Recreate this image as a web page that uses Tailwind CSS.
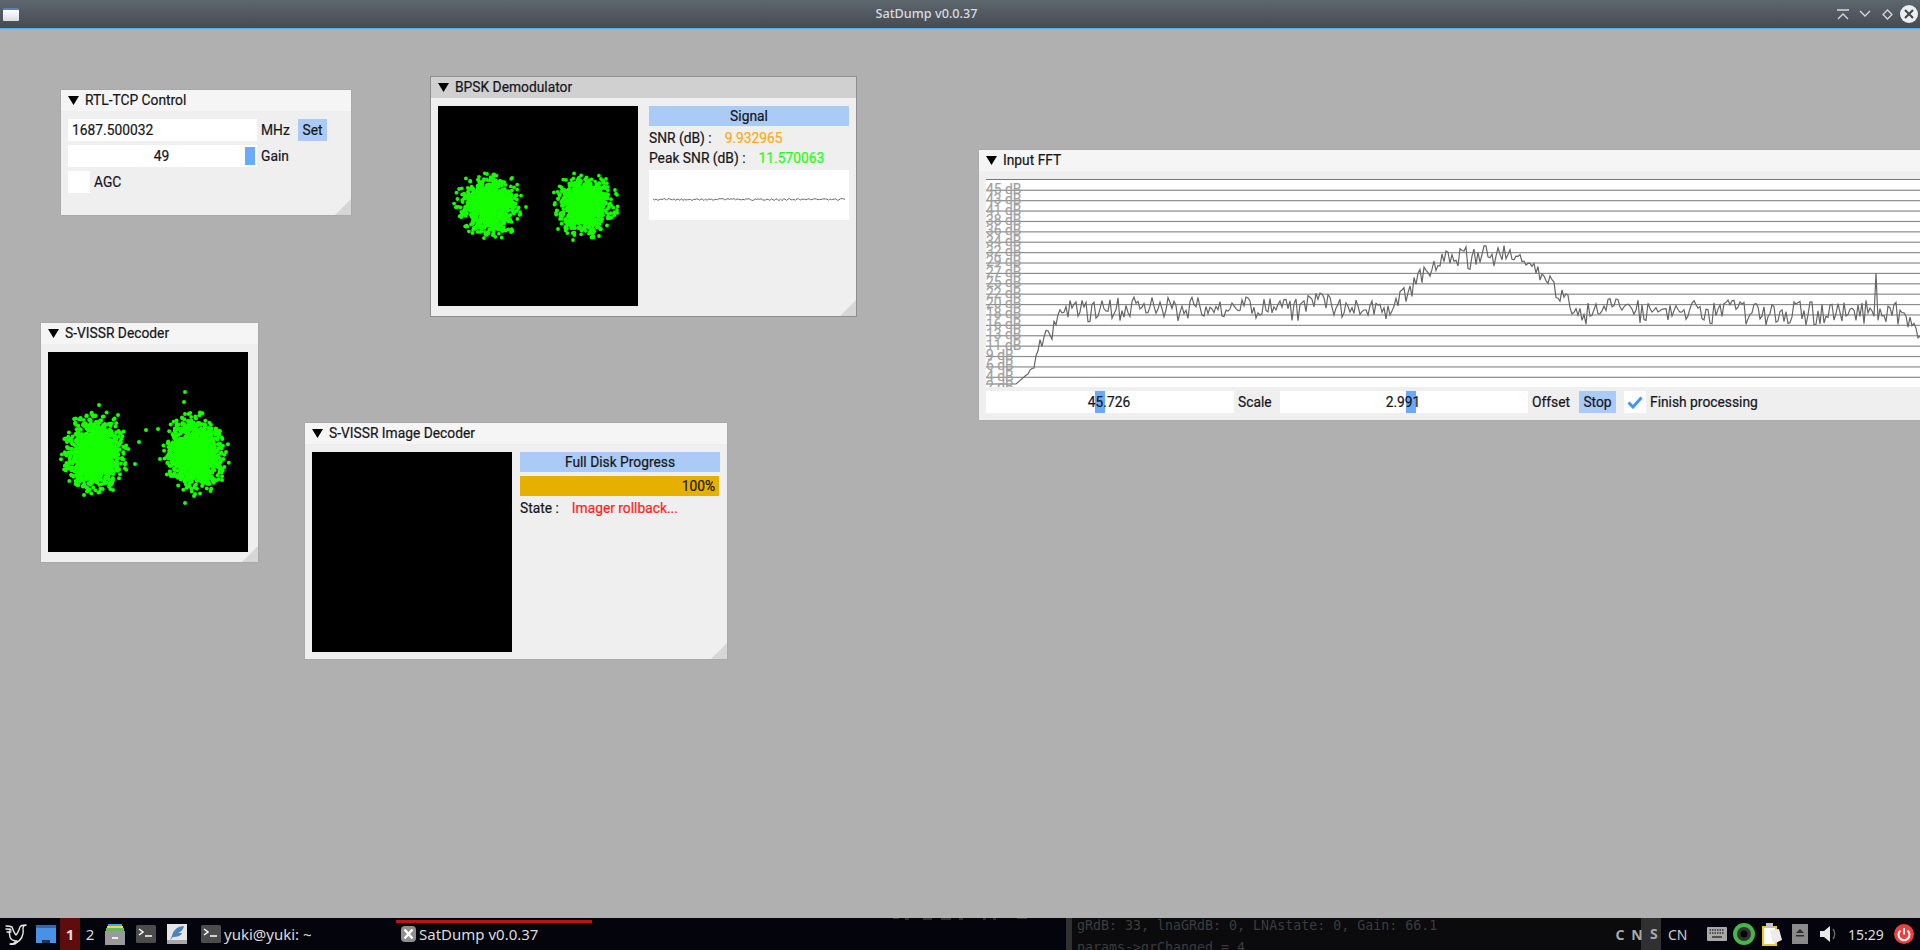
<!DOCTYPE html>
<html>
<head>
<meta charset="utf-8">
<script src="https://cdn.jsdelivr.net/npm/@tailwindcss/browser@4"></script>
<title>SatDump</title>
</head>
<body class="m-0 overflow-hidden">
<div class="relative w-[1920px] h-[950px] bg-[#b0b0b0] overflow-hidden font-['Roboto',sans-serif] font-normal [-webkit-text-stroke:0.2px_currentColor] text-[13.800px] text-[#16161a] flex flex-col">

  <!-- title bar -->
  <header class="h-[29px] shrink-0 flex items-center relative bg-gradient-to-b from-[#5e666e] to-[#444b53] border-b border-[#4ab0e8] [-webkit-text-stroke:0]">
    <div class="ml-[3px] w-4 h-[13px] bg-gradient-to-b from-[#ffffff] to-[#dcdcdc] border-t-2 border-[#5b7fb5] rounded-[1px]"></div>
    <div class="absolute left-0 top-0 w-[1853px] h-[28px] flex items-center justify-center text-[12.700px] text-[#d8dcdf] font-['Noto_Sans',sans-serif] font-medium">SatDump v0.0.37</div>
    <div class="ml-auto flex items-center">
      <svg width="12" height="11" viewBox="0 0 12 11" class="mr-[10px]" fill="none" stroke="#d5dadd" stroke-width="1.300"><path d="M0 1h12M1 10l5-5 5 5"/></svg>
      <svg width="12" height="8" viewBox="0 0 12 8" class="mr-[11px]" fill="none" stroke="#d5dadd" stroke-width="1.300"><path d="M1 1l5 5 5-5"/></svg>
      <svg width="11" height="11" viewBox="0 0 11 11" class="mr-[7px]" fill="none" stroke="#d5dadd" stroke-width="1.300"><path d="M5.500 1l4.500 4.500-4.500 4.500-4.500-4.500z"/></svg>
      <svg width="18" height="18" viewBox="0 0 18 18" class="mr-[2px]"><circle cx="9" cy="9" r="9" fill="#eceeef"/><path d="M5 5l8 8M13 5l-8 8" stroke="#3e454c" stroke-width="2"/></svg>
    </div>
  </header>

  <!-- desktop -->
  <main class="relative flex-1">

    <!-- RTL-TCP Control -->
    <section class="absolute left-[61px] top-[61px] w-[290px] h-[125px] bg-[#efefef] shadow-[0_0_1px_#8a8a8a]">
      <div class="h-[21px] bg-[#f5f5f5] flex items-center pl-[7px] gap-[6px]">
        <svg width="11" height="9" viewBox="0 0 11 9"><path d="M0 0h11L5.500 9z" fill="#000"/></svg><span>RTL-TCP Control</span>
      </div>
      <div class="pl-[7px] pt-2 flex flex-col gap-1">
        <div class="flex items-center h-[22px] pt-0">
          <div class="w-[189px] h-full bg-white flex items-center pl-1 pt-[1px]">1687.500032</div>
          <span class="ml-[4px] w-[37px] pt-[1px]">MHz</span>
          <div class="w-[29px] h-full bg-[#a9cbf5] flex items-center justify-center pt-[1px]">Set</div>
        </div>
        <div class="flex items-center h-[22px]">
          <div class="w-[189px] h-full bg-white relative flex items-center justify-center pr-[2px] pt-[1px]">49
            <div class="absolute left-[177px] top-[2px] w-[10px] h-[18px] bg-[#69abfa]"></div>
          </div>
          <span class="ml-[4px] pt-[1px]">Gain</span>
        </div>
        <div class="flex items-center h-[22px]">
          <div class="w-[22px] h-full bg-white"></div>
          <span class="ml-1 pt-[1px]">AGC</span>
        </div>
      </div>
      <svg class="absolute right-0 bottom-0" width="16" height="16"><path d="M16 0v16H0z" fill="#d6d6d6"/></svg>
    </section>

    <!-- BPSK Demodulator -->
    <section class="absolute left-[430px] top-[47px] w-[427px] h-[241px] bg-[#efefef] border border-[#8f8f8f]">
      <div class="h-[21px] bg-[#d0d0d0] flex items-center pl-[7px] gap-[6px]">
        <svg width="11" height="9" viewBox="0 0 11 9"><path d="M0 0h11L5.500 9z" fill="#000"/></svg><span>BPSK Demodulator</span>
      </div>
      <div class="pl-[7px] pt-2 flex gap-[11px]">
        <svg id="c1" width="200" height="200" class="bg-black block shrink-0"></svg>
        <div class="w-[200px] flex flex-col">
          <div class="h-5 bg-[#a9cbf5] flex items-center justify-center pt-[1px]">Signal</div>
          <div class="flex h-5 mt-[2px] items-center"><span>SNR (dB) :</span><span class="ml-[13px] text-[#ffaa1e]">9.932965</span></div>
          <div class="flex h-5 items-center"><span>Peak SNR (dB) :</span><span class="ml-[13px] text-[#1dff0a]">11.570063</span></div>
          <svg id="snr" width="200" height="50" class="bg-white block mt-[2px]"></svg>
        </div>
      </div>
      <svg class="absolute right-0 bottom-0" width="16" height="16"><path d="M16 0v16H0z" fill="#d6d6d6"/></svg>
    </section>

    <!-- Input FFT -->
    <section class="absolute left-[979px] top-[121px] w-[960px] h-[270px] bg-[#efefef] shadow-[0_0_1px_#8a8a8a]">
      <div class="h-[21px] bg-[#f5f5f5] flex items-center pl-[7px] gap-[6px]">
        <svg width="11" height="9" viewBox="0 0 11 9"><path d="M0 0h11L5.500 9z" fill="#000"/></svg><span>Input FFT</span>
      </div>
      <div class="pl-[7px] pt-2">
        <div class="relative w-[934px] h-[208px] bg-white overflow-hidden">
          <svg id="fft" width="934" height="208" class="block"></svg>
          <div class="absolute inset-0 text-[13.800px] leading-[14px] text-[#a0a0a0]">
            <span class="absolute left-0 top-[3px]">45 dB</span><span class="absolute left-0 top-[13px]">43 dB</span><span class="absolute left-0 top-[24px]">41 dB</span><span class="absolute left-0 top-[34px]">38 dB</span><span class="absolute left-0 top-[44px]">36 dB</span><span class="absolute left-0 top-[55px]">34 dB</span><span class="absolute left-0 top-[65px]">32 dB</span><span class="absolute left-0 top-[75px]">29 dB</span><span class="absolute left-0 top-[86px]">27 dB</span><span class="absolute left-0 top-[96px]">25 dB</span><span class="absolute left-0 top-[107px]">22 dB</span><span class="absolute left-0 top-[117px]">20 dB</span><span class="absolute left-0 top-[127px]">18 dB</span><span class="absolute left-0 top-[138px]">16 dB</span><span class="absolute left-0 top-[148px]">13 dB</span><span class="absolute left-0 top-[159px]">11 dB</span><span class="absolute left-0 top-[169px]">9 dB</span><span class="absolute left-0 top-[179px]">6 dB</span><span class="absolute left-0 top-[190px]">4 dB</span><span class="absolute left-0 top-[200px]">2 dB</span>
          </div>
        </div>
        <div class="flex items-center h-[22px] mt-1">
          <div class="w-[248px] h-full bg-white relative flex items-center justify-center pr-[2px] pt-[1px]"><span class="relative z-10">45.726</span><div class="absolute left-[109px] top-0 w-[10px] h-full bg-[#69abfa]"></div></div>
          <span class="ml-1 w-[42px] pt-[1px]">Scale</span>
          <div class="w-[248px] h-full bg-white relative flex items-center justify-center pr-[2px] pt-[1px]"><span class="relative z-10">2.991</span><div class="absolute left-[126px] top-0 w-[10px] h-full bg-[#69abfa]"></div></div>
          <span class="ml-1 w-[47px] pt-[1px]">Offset</span>
          <div class="w-[37px] h-full bg-[#a9cbf5] flex items-center justify-center pt-[1px]">Stop</div>
          <div class="ml-2 w-[22px] h-full bg-white flex items-center justify-center">
            <svg width="16" height="13" viewBox="0 0 16 13" fill="none"><path d="M1.500 6.500l4.500 4.500 8.500-9.500" stroke="#3f96f5" stroke-width="3"/></svg>
          </div>
          <span class="ml-1 pt-[1px]">Finish processing</span>
        </div>
      </div>
    </section>

    <!-- S-VISSR Decoder -->
    <section class="absolute left-[41px] top-[294px] w-[217px] h-[239px] bg-[#efefef] shadow-[0_0_1px_#8a8a8a]">
      <div class="h-[21px] bg-[#f5f5f5] flex items-center pl-[7px] gap-[6px]">
        <svg width="11" height="9" viewBox="0 0 11 9"><path d="M0 0h11L5.500 9z" fill="#000"/></svg><span>S-VISSR Decoder</span>
      </div>
      <div class="pl-[7px] pt-2">
        <svg id="c2" width="200" height="200" class="bg-black block"></svg>
      </div>
      <svg class="absolute right-0 bottom-0" width="16" height="16"><path d="M16 0v16H0z" fill="#d6d6d6"/></svg>
    </section>

    <!-- S-VISSR Image Decoder -->
    <section class="absolute left-[305px] top-[394px] w-[422px] h-[236px] bg-[#efefef] shadow-[0_0_1px_#8a8a8a]">
      <div class="h-[21px] bg-[#f5f5f5] flex items-center pl-[7px] gap-[6px]">
        <svg width="11" height="9" viewBox="0 0 11 9"><path d="M0 0h11L5.500 9z" fill="#000"/></svg><span>S-VISSR Image Decoder</span>
      </div>
      <div class="pl-[7px] pt-2 flex gap-2">
        <div class="w-[200px] h-[200px] bg-black shrink-0"></div>
        <div class="w-[200px] flex flex-col">
          <div class="h-5 bg-[#a9cbf5] flex items-center justify-center pt-[1px]">Full Disk Progress</div>
          <div class="h-5 w-[199px] mt-1 bg-[#e6b000] flex items-center justify-end pr-1">100%</div>
          <div class="flex h-5 mt-[2px] items-center"><span>State :</span><span class="ml-[13px] text-[#ff1e1e]">Imager rollback...</span></div>
        </div>
      </div>
      <svg class="absolute right-0 bottom-0" width="16" height="16"><path d="M16 0v16H0z" fill="#d6d6d6"/></svg>
    </section>
  </main>

  <!-- taskbar -->
  <footer class="h-[32px] shrink-0 relative flex items-center bg-[#04040c] text-[#dcdcdc] font-['Noto_Sans',sans-serif] font-normal [-webkit-text-stroke:0] text-[15px] overflow-hidden">
    <svg width="22" height="23" viewBox="0 0 22 23" class="ml-[5px] shrink-0" fill="none" stroke="#e6e6e6" stroke-width="1.400" stroke-linecap="round" stroke-linejoin="round"><path d="M1 3c2 0 4 0 6 1M1 6c2 0 4 0 5 1M2 9c1 0 3 0 4 0M7 4c1 3 2 6 4 8 2-2 3-5 4-8 1-2 4-2 6-2-2 1-3 1-3 3 1 6-1 12-8 16-1 0-3 1-5 0 3 0 5-1 7-3-3 0-6-1-7-4-1-3-1-5 0-8"/></svg>
    <svg width="20" height="18" viewBox="0 0 20 18" class="ml-[9px] shrink-0"><path d="M0 0h20v18H0z" fill="#4a90e4"/><path d="M0 0h20v3H0z" fill="#2f68b4"/><path d="M6 15h8v3H6z" fill="#1f3350"/></svg>
    <div class="ml-1 w-[20px] h-full bg-[#5e0c0c] flex items-center justify-center font-bold text-[#e2dcdc] text-[15px]">1</div>
    <span class="w-[20px] text-center">2</span>
    <svg width="20" height="21" viewBox="0 0 20 21" class="ml-[5px] shrink-0"><path d="M3 0h14v2H3z" fill="#4ea3e0"/><path d="M2 2h16v2H2z" fill="#f0d64a"/><path d="M1 4h18v3H1z" fill="#62bb5e"/><path d="M0 7h20v14H0z" fill="#9a9a9a"/><path d="M7 13h6v2H7z" fill="#eee"/></svg>
    <svg width="20" height="18" viewBox="0 0 20 18" class="ml-[11px] shrink-0"><rect width="20" height="18" rx="1.500" fill="#4c4c4c"/><path d="M3 4l4 3-4 3" fill="none" stroke="#fff" stroke-width="1.500"/><path d="M9 11h7" stroke="#fff" stroke-width="1.500"/></svg>
    <svg width="20" height="20" viewBox="0 0 20 20" class="ml-[11px] shrink-0"><path d="M0 0h20v20H0z" fill="#e6e6e6"/><path d="M0 16h20v4H0z" fill="#a8a8a8"/><path d="M17 2c-6 0-11 4-12 10l-2 4 3-3c4 0 8-1 9-4-2 0-3 0-4-.5 2 0 5-2 6-6.500z" fill="#4a82c4"/></svg>
    <svg width="20" height="18" viewBox="0 0 20 18" class="ml-[14px] shrink-0"><rect width="20" height="18" rx="1.500" fill="#4c4c4c"/><path d="M3 4l4 3-4 3" fill="none" stroke="#fff" stroke-width="1.500"/><path d="M9 11h7" stroke="#fff" stroke-width="1.500"/></svg>
    <span class="ml-[3px]">yuki@yuki: ~</span>

    <div class="absolute left-[396px] top-[2px] w-[196px] h-[3px] bg-[#b8141a]"></div>
    <div class="absolute left-[401px] top-0 h-full flex items-center gap-[3px]">
      <svg width="15" height="16" viewBox="0 0 15 16"><rect width="15" height="16" rx="4" fill="#8f8f8f"/><path d="M3.500 3.500l8 9M11.500 3.500l-8 9" stroke="#fff" stroke-width="2.500"/></svg>
      <span>SatDump v0.0.37</span>
    </div>

    <!-- cut-off tops of a covered line -->
    <svg class="absolute left-[893px] top-0" width="135" height="3"><path d="M0 0h6v1H0zM12 0h4v2h-4zM30 0h9v2h-9zM48 0h10v2H48zM66 0h4v2h-4zM90 0h3v2h-3zM100 0h3v2h-3zM124 0h10v1h-10z" fill="#303034"/></svg>

    <!-- terminal strip under the panel -->
    <div class="absolute left-[1066px] top-0 bottom-0 w-[575px] bg-[#0b0b0d] border-l-[6px] border-[#303032] font-['DejaVu_Sans_Mono',monospace] text-[13.300px] leading-[22px] text-[#3c3c3e] pl-[5px]">
      <div class="-mt-[3px] whitespace-pre">gRdB: 33, lnaGRdB: 0, LNAstate: 0, Gain: 66.1</div>
      <div class="whitespace-pre">params-&gt;grChanged = 4</div>
    </div>

    <div class="absolute right-0 top-0 h-full flex items-center text-[14px] mr-[6px]">
      <span class="w-4 text-center font-bold text-[#a8a8a8]">C</span>
      <span class="relative z-10 w-[18px] text-center font-bold text-[#a8a8a8]">N</span>
      <span class="-ml-[5px] w-[20px] h-[32px] pl-[9px] bg-[#303032] leading-[32px] font-bold text-[#a8a8a8]">S</span>
      <span class="ml-[7px] w-[20px] text-[#cfcfcf]">CN</span>
      <svg width="20" height="14" viewBox="0 0 20 14" class="ml-[19px] shrink-0"><rect width="20" height="14" rx="1" fill="#a8a8a8"/><path d="M2.500 3h15M2.500 6h15" stroke="#333" stroke-width="1.500" stroke-dasharray="1.500 1"/><path d="M5 10h10" stroke="#333" stroke-width="1.500"/></svg>
      <svg width="22" height="22" viewBox="0 0 22 22" class="ml-[6px] shrink-0"><circle cx="11" cy="11" r="11" fill="#47b648"/><circle cx="11" cy="11" r="7" fill="#333"/><circle cx="11" cy="11" r="3.500" fill="#050505"/></svg>
      <svg width="20" height="23" viewBox="0 0 20 23" class="ml-[7px] shrink-0"><path d="M0 3h15v20H0z" fill="#f2c81f"/><path d="M2 5h11v16H2z" fill="#fff"/><path d="M4 0h7v4H4z" fill="#c4c4c4"/><path d="M8 7l9-1 3 11-9 4z" fill="#ececec"/></svg>
      <svg width="16" height="20" viewBox="0 0 16 20" class="ml-[10px] shrink-0"><rect width="16" height="20" fill="#8a8a8a"/><path d="M8 5l4 4H4z" fill="#2e2e2e"/><path d="M4 11h8v1.500H4z" fill="#2e2e2e"/></svg>
      <svg width="17" height="16" viewBox="0 0 17 16" class="ml-3 shrink-0"><path d="M0 5h4l6-5v16l-6-5H0z" fill="#e8e8e8"/><path d="M13 3c2 3 2 7 0 10" fill="none" stroke="#666" stroke-width="1.500"/></svg>
      <span class="ml-[11px] w-[37px]">15:29</span>
      <svg width="20" height="20" viewBox="0 0 20 20" class="ml-[9px] shrink-0"><circle cx="10" cy="10" r="10" fill="#ee3f3f"/><path d="M10 4v6.500" stroke="#fff" stroke-width="2"/><path d="M6.500 6.500a5.500 5.500 0 1 0 7 0" fill="none" stroke="#fff" stroke-width="2"/></svg>
    </div>
  </footer>
</div>

<script>
function rng(s){return function(){s=(s*1664525+1013904223)>>>0;return s/4294967296;};}
function gauss(r){return r()+r()+r()+r()+r()+r()-3;}
var NS='http://www.w3.org/2000/svg';
function add(svg,name,attrs){var e=document.createElementNS(NS,name);for(var k in attrs)e.setAttribute(k,attrs[k]);svg.appendChild(e);}
function scatter(id,seed,centers,sx,sy,n,extra,rad,lim){
  var svg=document.getElementById(id),r=rng(seed),p='';
  centers.forEach(function(c){for(var i=0;i<n;i++){
    var gx=gauss(r)/0.707,gy=gauss(r)/0.707,m=Math.sqrt(gx*gx+gy*gy);
    if(m>lim)continue;
    p+='<circle cx="'+(c[0]+gx*sx).toFixed(1)+'" cy="'+(c[1]+gy*sy).toFixed(1)+'" r="'+rad+'"/>';
  }});
  extra.forEach(function(e){p+='<circle cx="'+e[0]+'" cy="'+e[1]+'" r="'+rad+'"/>';});
  svg.innerHTML='<g fill="#16ff00">'+p+'</g>';
}
scatter('c1',7,[[51,99],[147,99]],11.500,11.500,1300,[[49,68],[21,83],[88,101],[73,126],[35,124],[46,132],[163,73],[177,84],[179,104],[120,123],[135,134],[117,97],[161,130]],1.900,3.100);
scatter('c2',11,[[47,101],[147,101]],12,15,1500,[[137,40],[136,50],[137,151],[146,144],[98,78],[110,77],[91,90],[112,107],[51,53],[70,63],[36,143],[65,138],[19,95],[87,112],[178,100],[174,128]],2,2.900);

// FFT
(function(){
  var svg=document.getElementById('fft'),ox=986,oy=179;
  add(svg,'rect',{x:0,y:0,width:934,height:1,fill:'#777'});
  for(var i=1;i<20;i++){add(svg,'rect',{x:0,y:(0.300+i*10.390).toFixed(2),width:934,height:1.200,fill:'#8c8c8c'});}
  var env=[[986,384],[1020,384],[1026,379],[1032,372],[1038,348],[1044,334],[1052,332],[1058,312],[1066,308],[1078,306],[1300,306],[1318,301],[1340,305],[1393,307],[1408,285],[1425,272],[1445,255],[1475,254],[1510,253],[1522,262],[1540,274],[1555,290],[1572,306],[1590,311],[1610,305],[1640,309],[1900,309],[1908,320],[1915,325],[1920,337]];
  function base(x){for(var i=1;i<env.length;i++){if(x<=env[i][0]){var a=env[i-1],b=env[i];return a[1]+(b[1]-a[1])*(x-a[0])/(b[0]-a[0]);}}return 337;}
  var r=rng(42),d='',x=ox;
  while(x<=1920){
    var b=base(x),y=b;
    if(x>1025){
      var amp=(x>1060&&x<1905)?1:0.5,u=r();
      y=b+(u<0.2?(8+r()*8):(r()*17-9))*amp;
    }
    if(x>=1875&&x<1877.200)y=273;
    d+=(d?'L':'M')+(x-ox).toFixed(1)+' '+(y-oy).toFixed(1);
    x+=x<1020?10:2;
  }
  add(svg,'path',{d:d,fill:'none',stroke:'#666','stroke-width':1.200});
})();

// SNR trace
(function(){
  var svg=document.getElementById('snr'),r=rng(5),d='';
  for(var x=4;x<197;x+=1.500){d+=(d?'L':'M')+x+' '+(29.500+(r()-0.500)*2).toFixed(1);}
  add(svg,'path',{d:d,fill:'none',stroke:'#6a6a6a','stroke-width':1});
})();
</script>
</body>
</html>
